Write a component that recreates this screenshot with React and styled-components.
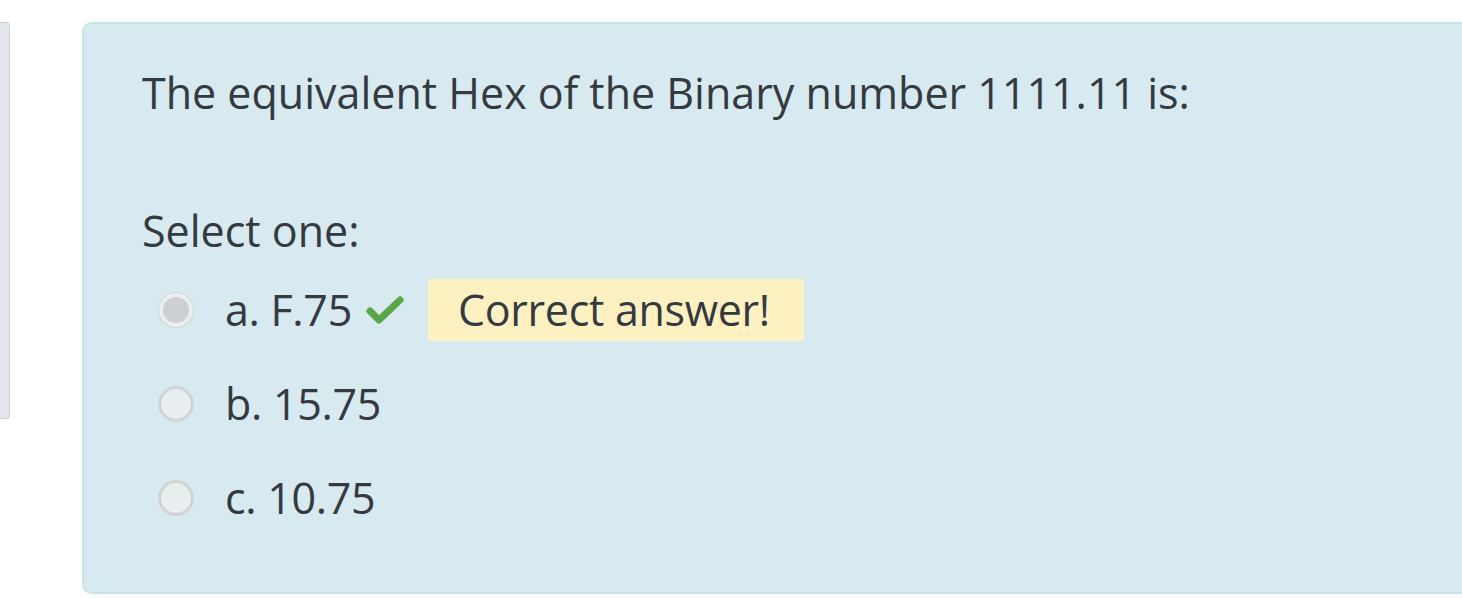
import styled, { createGlobalStyle } from "styled-components";

const GlobalStyle = createGlobalStyle`
  html, body {
    margin: 0;
    padding: 0;
    background: #fff;
    overflow: hidden;
  }
  body {
    font-family: "Open Sans", "Noto Sans", "Liberation Sans", sans-serif;
    color: #343a3f;
  }
`;

const Page = styled.div`
  display: flex;
  align-items: flex-start;
  gap: 72px;
  padding-top: 22px;
  width: 1462px;
  height: 598px;
  overflow: hidden;
`;

const InfoStub = styled.div`
  width: 9px;
  height: 395px;
  flex-shrink: 0;
  background: #e2e5ea;
  border: 1px solid #cdd1d6;
  border-left: none;
  border-radius: 0 4px 4px 0;
`;

const Formulation = styled.div`
  flex: 1;
  margin-right: -30px;
  height: 572px;
  box-sizing: border-box;
  background: #d7eaf0;
  border: 2px solid #c9e2ea;
  border-radius: 10px;
  padding: 40px 60px 0 58px;
`;

const QText = styled.p`
  margin: 0;
  font-size: 43px;
  line-height: 58px;
`;

const Prompt = styled.div`
  margin-top: 80px;
  font-size: 43px;
  line-height: 58px;
`;

const Answers = styled.div`
  display: flex;
  flex-direction: column;
  gap: 32px;
  margin-top: 19px;
  padding-left: 17px;
`;

const Option = styled.label`
  display: flex;
  align-items: center;
  gap: 32px;
  height: 62px;
  font-size: 43px;
  line-height: 58px;
`;

const Radio = styled.span`
  width: 34px;
  height: 34px;
  border-radius: 50%;
  box-sizing: border-box;
  flex-shrink: 0;
  background: ${(p) => (p.checked ? "#cdd0d2" : "#e9eef0")};
  border: ${(p) => (p.checked ? "4px solid #eceeee" : "2px solid #d0d3d4")};
  box-shadow: 0 0 0 1px #d3d6d7;
`;

const Label = styled.span`
  display: flex;
  align-items: center;
  gap: 13px;
  height: 100%;
  letter-spacing: -0.3px;
`;

const Feedback = styled.span`
  align-self: stretch;
  display: flex;
  align-items: center;
  margin-left: 10px;
  background: #fdf1c2;
  padding: 0 34px 0 30px;
`;

const Check = () => (
  <svg width="40" height="32" viewBox="0 0 40 32">
    <polyline
      points="5,17 14,26 35,6"
      fill="none"
      stroke="#5aa845"
      strokeWidth="7"
      strokeLinecap="round"
      strokeLinejoin="round"
    />
  </svg>
);

const answers = [
  { key: "a", text: "F.75", checked: true, correct: true },
  { key: "b", text: "15.75" },
  { key: "c", text: "10.75" },
];

export default function App() {
  return (
    <>
      <GlobalStyle />
      <Page>
        <InfoStub />
        <Formulation>
          <QText>The equivalent Hex of the Binary number 1111.11 is:</QText>
          <Prompt>Select one:</Prompt>
          <Answers>
            {answers.map((a) => (
              <Option key={a.key}>
                <Radio checked={a.checked} />
                <Label>
                  {a.key}. {a.text}
                  {a.correct && <Check />}
                  {a.correct && <Feedback>Correct answer!</Feedback>}
                </Label>
              </Option>
            ))}
          </Answers>
        </Formulation>
      </Page>
    </>
  );
}
